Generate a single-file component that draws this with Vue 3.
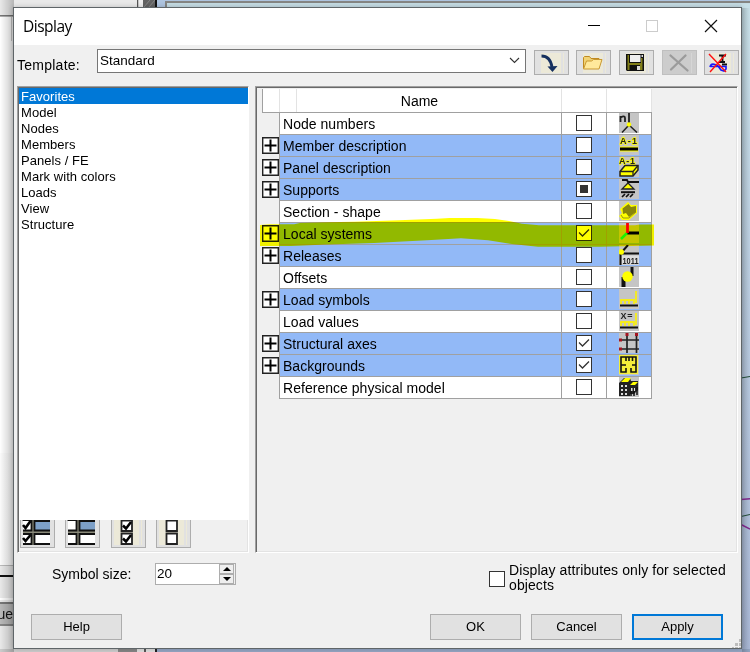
<script setup>
import { ref } from 'vue'

const categories = ['Favorites', 'Model', 'Nodes', 'Members', 'Panels / FE', 'Mark with colors', 'Loads', 'View', 'Structure']
const selected = ref('Favorites')
const rows = [
  { name: 'Node numbers', group: false, state: 'off', icon: 'nodes' },
  { name: 'Member description', group: true, state: 'off', icon: 'member' },
  { name: 'Panel description', group: true, state: 'off', icon: 'panel' },
  { name: 'Supports', group: true, state: 'mixed', icon: 'support' },
  { name: 'Section - shape', group: false, state: 'off', icon: 'section' },
  { name: 'Local systems', group: true, state: 'on', icon: 'axes' },
  { name: 'Releases', group: true, state: 'off', icon: 'release' },
  { name: 'Offsets', group: false, state: 'off', icon: 'offset' },
  { name: 'Load symbols', group: true, state: 'off', icon: 'loads' },
  { name: 'Load values', group: false, state: 'off', icon: 'values' },
  { name: 'Structural axes', group: true, state: 'on', icon: 'grid' },
  { name: 'Backgrounds', group: true, state: 'on', icon: 'plan' },
  { name: 'Reference physical model', group: false, state: 'off', icon: 'model' }
]
</script>

<template>
  <main class="desktop">
    <svg class="backdrop" width="750" height="652" viewBox="0 0 750 652">
      <defs>
        <linearGradient id="sky" x1="0" y1="0" x2="0" y2="1">
          <stop offset="0" stop-color="#c8e0e8" /><stop offset=".5" stop-color="#b9cbe0" /><stop offset="1" stop-color="#a9b8d6" />
        </linearGradient>
        <linearGradient id="shade" x1="0" y1="0" x2="1" y2="0">
          <stop offset="0" stop-color="#000" stop-opacity="0" /><stop offset="1" stop-color="#000" stop-opacity=".22" />
        </linearGradient>
        <linearGradient id="shadeRight" x1="0" y1="0" x2="1" y2="0">
          <stop offset="0" stop-color="#000" stop-opacity=".17" /><stop offset="1" stop-color="#000" stop-opacity="0" />
        </linearGradient>
      </defs>
      <rect width="750" height="652" fill="#e9e9e9" />
      <rect y="15" width="138" height="1.5" fill="#777" />
      <rect y="17" width="14" height="436" fill="#fff" />
      <rect y="453" width="14" height="112" fill="#fbfbfb" />
      <rect x="11" y="17" width="1" height="24" fill="#ccc" />
      <rect y="565" width="14" height="1" fill="#bbb" />
      <rect y="575" width="14" height="2" fill="#111" />
      <rect y="598" width="14" height="2" fill="#fff" />
      <rect y="602" width="14" height="24" fill="#b9b9b9" />
      <rect y="602" width="14" height="2" fill="#777" /><rect y="624" width="14" height="2" fill="#888" />
      <rect x="137" width="1.5" height="8" fill="#555" />
      <rect x="138.500" width="4.500" height="8" fill="#eee" />
      <rect x="143" width="12" height="8" fill="#626262" />
      <path d="M144 7l6-7M149 7l6-7" stroke="#858585" />
      <rect x="155" width="2" height="8" fill="#111" />
      <rect x="157" width="593" height="8" fill="#aec4df" />
      <rect x="165" y="1" width="585" height="7" fill="#c5dce4" />
      <path d="M166 8V2H750" fill="none" stroke="#858583" stroke-width="2" />
      <rect x="742" y="4" width="8" height="648" fill="url(#sky)" />
      <rect y="649" width="118" height="3" fill="#ccc" />
      <rect x="118" y="649" width="19" height="3" fill="#858585" />
      <rect x="137" y="649" width="7" height="3" fill="#ddd" />
      <rect x="144" y="649" width="2" height="3" fill="#555" />
      <rect x="146" y="649" width="9" height="3" fill="#ddd" />
      <rect x="155" y="649" width="2" height="3" fill="#222" />
      <rect x="157" y="649" width="593" height="3" fill="#94a5c2" />
      <rect width="14" height="652" fill="url(#shade)" />
      <rect x="742" y="8" width="8" height="644" fill="url(#shadeRight)" />
      <path d="M741 378l9-1.500M741 516.500l9-2" stroke="#244c38" stroke-width="1.200" />
      <path d="M741 499.500l9-.8M741 524.500l9 4.500" stroke="#7d2889" stroke-width="1.400" />
      <text x="-2.500" y="619" class="back-text">ue</text>
    </svg>

    <section class="dialog">
      <header class="titlebar">
        <h1>Display</h1>
        <svg width="130" height="14" viewBox="0 0 130 14" fill="none">
          <path d="M0 6.500h12" stroke="#000" />
          <rect x="58.500" y="1.500" width="11" height="11" stroke="#ccc" />
          <path d="M117 1l12 12M129 1l-12 12" stroke="#111" stroke-width="1.150" />
        </svg>
      </header>

      <div class="toolbar">
        <label>Template:</label>
        <div class="combo"><span>Standard</span>
          <svg width="11" height="7" viewBox="0 0 11 7"><path d="M1 1l4.500 4.500L10 1" fill="none" stroke="#333" stroke-width="1.100" /></svg>
        </div>
        <div class="tools">
          <button class="tool"><svg width="33" height="23" viewBox="0 0 33 23">
            <rect x="6" y="2" width="20" height="20" fill="#ece9d8" />
            <path d="M28.500 2v20" stroke="#ece9d8" />
            <path d="M6.500 5c7 0 9.500 5 10.500 11" fill="none" stroke="#15305f" stroke-width="2.800" /><path d="M12.500 15.500l10-.5-5 6z" fill="#15305f" />
          </svg></button>
          <button class="tool"><svg width="33" height="23" viewBox="0 0 33 23">
            <rect x="6" y="2" width="20" height="20" fill="#ece9d8" />
            <path d="M28.500 2v20" stroke="#ece9d8" />
            <path d="M6.500 17V6.500l1-1h5l1.500 2H22V17z" fill="#f1d374" stroke="#c08a20" /><path d="M6.500 18l3-8h5l2-1.500h8.500l-3 9.500z" fill="#ffe99b" stroke="#c99831" />
          </svg></button>
          <button class="tool"><svg width="33" height="23" viewBox="0 0 33 23">
            <rect x="6" y="2" width="20" height="20" fill="#ece9d8" />
            <path d="M28.500 2v20" stroke="#ece9d8" />
            <path d="M6 3h18v17H7l-1-1z" fill="#111" /><path d="M7.500 4h1.500v8h12V7h1.500v12h-2.500v-5H9.500v5h-2z" fill="#827f19" /><path d="M10 4h10.500v7H10z" fill="#eee" /><path d="M21.500 4h1.500v2h-1.500z" fill="#ddd" /><path d="M17 15h3v4h-3z" fill="#ddd" />
          </svg></button>
          <button class="tool disabled"><svg width="33" height="23" viewBox="0 0 33 23">
            <path d="M28.500 2v20" stroke="#d6d6d6" />
            <path d="M7.500 4.500l17 15M22.500 4.500L8 18.500" fill="none" stroke="#9b9b9b" stroke-width="2.300" stroke-linecap="round" />
          </svg></button>
          <button class="tool"><svg width="33" height="23" viewBox="0 0 33 23">
            <rect x="6" y="2" width="20" height="20" fill="#ece9d8" />
            <path d="M28.500 2v20" stroke="#ece9d8" />
            <path d="M14 4.500h7M17.500 4v7M14 11h6M17 13.500h5" stroke="#111" stroke-width="1.800" />
            <path d="M5 16q1-4 5-2.500l3 1.500 3 4 3 1 2-2v-3M5 15.500h16" fill="none" stroke="#1718ff" stroke-width="1.700" />
            <path d="M4 3l17 18M21 3L5 21" stroke="#f11" stroke-width="1.400" />
          </svg></button>
        </div>
      </div>

      <div class="panels">
        <div class="sunken left">
          <ul class="list">
            <li v-for="item in categories" :key="item" :class="{ active: item === selected }" @click="selected = item">{{ item }}</li>
          </ul>
          <div class="mini-tools">
            <button v-for="n in 4" :key="n" class="mini" :class="'mini-' + n">
              <svg width="33" height="27" viewBox="0 0 33 27">
                <template v-if="n < 3">
                  <rect x="2" width="27" height="25" fill="#8a8a7a" />
                  <path d="M2 0h8.500v10.500H2zM2 14h8.500v10H2z" fill="#fff" />
                  <path d="M2 .5V0h8.500v10.500H2M2 14h8.500v10H2" fill="none" stroke="#111" stroke-width="1.800" />
                  <path d="M14 1h15v9.500H14z" fill="#7da0c8" /><path d="M14 14h15v10H14z" fill="#fff" />
                  <path d="M29 1H13.500v9.500H29M29 14H13.500v10H29" fill="none" stroke="#111" stroke-width="1.800" />
                  <path v-if="n === 1" d="M2 5l2.500 3 5-7M2 18l2.500 3 5-6" fill="none" stroke="#000" stroke-width="2.600" />
                </template>
                <template v-else>
                  <rect x="2" width="25" height="25" fill="#ece9d8" />
                  <path d="M29.500 0v25" stroke="#ece9d8" />
                  <path d="M9.500 .5h10.500v10.500H9.500zM9.500 13.500h10.500V24H9.500z" fill="#fff" stroke="#222" stroke-width="1.800" />
                  <path v-if="n === 3" d="M11 5.500l3 3 5-6.500M11 18.500l3 3 5-6.500" fill="none" stroke="#000" stroke-width="2.500" />
                </template>
              </svg>
            </button>
          </div>
        </div>

        <div class="sunken right">
          <div class="table">
            <div class="thead"><i /><i /><span>Name</span><i /><i /></div>
            <div v-for="row in rows" :key="row.name" class="row" :class="{ group: row.group }">
              <div class="expander">
                <svg v-if="row.group" width="17" height="17" viewBox="0 0 17 17"><path d="M.7 .7h15.600v15.600H.7z" fill="#fff" stroke="#222" stroke-width="1.400" /><path d="M8.500 2.500v12M2.500 8.500h12" stroke="#000" stroke-width="2" /></svg>
              </div>
              <div class="name">{{ row.name }}</div>
              <div class="check">
                <span class="box"><svg v-if="row.state !== 'off'" width="14" height="14" viewBox="0 0 14 14">
                  <path v-if="row.state === 'on'" d="M2 6.500l3.500 3.500L12 3.500" fill="none" stroke="#333" stroke-width="1.300" />
                  <path v-else d="M3 3h8v8H3z" fill="#333" />
                </svg></span>
              </div>
              <div class="picture">
                <svg width="20" height="20" viewBox="0 0 20 20">
                  <rect width="20" height="20" fill="#c5c5c5" />
                  <g v-if="row.icon === 'nodes'">
                    <path d="M1.500 3v6M1.500 4.500Q6 2 6 5v4M10 0v9" fill="none" stroke="#222" stroke-width="1.800" />
                    <path d="M10 12L3 19.500M10 12l8 7.500M10 12v-3" stroke="#222" stroke-width="1.500" /><circle cx="10" cy="11.500" r="2.200" fill="#ff0" />
                  </g>
                  <g v-else-if="row.icon === 'member'">
                    <text x="1" y="9" font-size="9" class="halo" textLength="17">A-1</text><path d="M1 14h18" stroke="#ff0" stroke-width="5" /><path d="M1 14h18" stroke="#000" stroke-width="3" />
                  </g>
                  <g v-else-if="row.icon === 'panel'">
                    <text x="0" y="7" font-size="9" class="halo" textLength="16">A-1</text>
                    <path d="M1 14.500l5-6h13v4.500l-5 6H1z" fill="#ff0" stroke="#222" stroke-width="1.500" /><path d="M1 14.500h13l5-6M14 14.500v4" fill="none" stroke="#222" stroke-width="1.300" />
                  </g>
                  <g v-else-if="row.icon === 'support'">
                    <path d="M3 1h5l1 2h11" fill="none" stroke="#111" stroke-width="1.800" /><path d="M9 4l6 6H3z" fill="#ff0" stroke="#222" stroke-width="1.300" /><path d="M2 13.200h14" stroke="#111" stroke-width="2" /><path d="M3 18l3-3M7 18l3-3M11 18l3-3" stroke="#111" stroke-width="1.700" />
                  </g>
                  <g v-else-if="row.icon === 'section'">
                    <path d="M1 8l8-7 3 3h6v8l-8 7H3L0 15l3-3z" fill="#ff0" /><path d="M3.500 7.500L9.500 3l2.500 3 5-1v6l-7 5-3-4-3 1z" fill="#88840b" /><path d="M2 14l2 3h6l7-6" fill="none" stroke="#9a9515" />
                  </g>
                  <g v-else-if="row.icon === 'axes'">
                    <path d="M8 10h12" stroke="#000" stroke-width="3" /><path d="M8 10l-6 6" stroke="#1df000" stroke-width="2.500" /><path d="M8.500 0v10" stroke="#f00" stroke-width="2.800" />
                  </g>
                  <g v-else-if="row.icon === 'release'">
                    <path d="M1.500 8v12M2 8l7-8M2 8.500h18" stroke="#111" stroke-width="2" /><circle cx="2.300" cy="7" r="2.700" fill="#ff0" />
                    <path d="M3 10.500h17v9H3z" fill="#ddd" /><text x="3.500" y="18.500" font-size="8.500" textLength="16" lengthAdjust="spacingAndGlyphs">1011</text>
                  </g>
                  <g v-else-if="row.icon === 'offset'">
                    <path d="M13 0v9" stroke="#111" stroke-width="3" /><path d="M4.500 10v10" stroke="#111" stroke-width="4" /><circle cx="8.500" cy="9.500" r="5.200" fill="#ff0" />
                  </g>
                  <g v-else-if="row.icon === 'loads' || row.icon === 'values'">
                    <text v-if="row.icon === 'values'" x="1.500" y="7.500" font-size="9" textLength="12">X=</text>
                    <path d="M2 15v-4h13v4M6 11v4M10 11v4M17 2v12" fill="none" stroke="#f6ed19" stroke-width="1.800" /><path d="M1 16.500h18" stroke="#111" stroke-width="2" />
                  </g>
                  <g v-else-if="row.icon === 'grid'">
                    <path d="M8 1v19M17.500 1v19M1 7h19M1 16h19" stroke="#222" stroke-width="1.700" /><path d="M6.500 0h3v3h-3zM16 0h3v3h-3zM0 5.500h3v3H0zM0 14.500h3v3H0z" fill="#a41420" />
                  </g>
                  <g v-else-if="row.icon === 'plan'">
                    <path d="M0 0h19v19H0z" fill="#f4ee3a" /><path d="M7 10H2V2h15v8h-4M2 9v8h5v-4M17 9v8h-5v-4M7 2v4M10 2v4M13.500 2v4" fill="none" stroke="#111" stroke-width="1.600" />
                  </g>
                  <g v-else>
                    <path d="M0 6l5-5h6l1 3h7v9l-4 4h-4v2H0z" fill="#222" /><path d="M2 5l4-4h6L9 5zM11 8l3-3h5l-3 3z" fill="#ff0" /><path d="M2 8h2v2H2zM6 8h2v2H6zM2 12h2v2H2zM6 12h2v2H6zM2 16h2v2H2zM6 16h2v2H6zM12 11h1.500v3H12zM15 11h1v3h-1z" fill="#ddd" />
                    <path d="M12 14v5M15 14v5M18 10v8" stroke="#111" stroke-width="1.500" />
                  </g>
                </svg>
              </div>
            </div>
          </div>
          <svg class="marker" width="396" height="31" viewBox="260 217 396 31">
            <path d="M260 224l10-.7h24l6-1.400 26-.6 28-.5 45-1.500 38-1.600 18-1h17l23 1.300 14 2 13 2.700 17 1.500h96l5-.8h14v21l-54 1.400h-62l-24-2.500-26-4-27-2-34 2-53 2.700-47 1.500-36 1.500h-38z" fill="#ff0" />
          </svg>
        </div>
      </div>

      <div class="settings">
        <label>Symbol size:</label>
        <div class="spinner"><span>20</span>
          <div class="arrows"><b><svg width="8" height="4" viewBox="0 0 8 4"><path d="M4 0l4 4H0z" /></svg></b><b><svg width="8" height="4" viewBox="0 0 8 4"><path d="M4 4l4-4H0z" /></svg></b></div>
        </div>
        <div class="only"><span class="box" /><p>Display attributes only for selected<br>objects</p></div>
      </div>

      <footer>
        <button class="action help">Help</button>
        <button class="action">OK</button>
        <button class="action">Cancel</button>
        <button class="action primary">Apply</button>
      </footer>
      <svg class="grip" width="10" height="10" viewBox="0 0 10 10"><path d="M1 9h2v1H1zM4 9h3v1H4zM8 9h2v1H8zM4 5h3v3H4zM8 5h2v3H8zM8 1h2v3H8z" fill="#bdbdbd" /></svg>
    </section>
  </main>
</template>

<style>
html, body { margin: 0; overflow: hidden; }
</style>

<style scoped>
* { box-sizing: border-box; }
.desktop { position: relative; width: 750px; height: 652px; overflow: hidden; padding: 7px 0 0 13px; font: 14px/16px "Liberation Sans", Arial, sans-serif; color: #000; }
.backdrop { position: absolute; left: 0; top: 0; }
.back-text { font-size: 14px; fill: #111; }
svg { display: block; }
button { padding: 0; margin: 0; border-radius: 0; color: #000; }
.dialog { position: relative; width: 729px; height: 642px; border: 1px solid #5f6568; background: #f0f0f0; box-shadow: 0 0 5px rgba(0, 0, 0, .2); }
.titlebar { display: flex; justify-content: space-between; height: 37px; padding: 11px 23px 0 9px; background: #fff; }
.titlebar h1 { margin: -3px 0 0; font: 400 15.5px/20px "Open Sans", "Noto Sans", sans-serif; letter-spacing: -.5px; }
.toolbar { display: flex; height: 41px; padding-left: 3px; align-items: flex-start; }
.toolbar label { width: 80px; padding-top: 12px; letter-spacing: .25px; }
.combo { display: flex; justify-content: space-between; align-items: center; width: 429px; height: 24px; margin-top: 4px; padding: 0 5px 1px 2px; border: 1px solid #767676; background: #fff; font-size: 13.5px; }
.tools { display: grid; grid-template-columns: 42px 43px 43px 42px 35px; margin: 5px 0 0 8px; }
.tool { width: 35px; height: 25px; border: 1px solid #adadad; background: #e1e1e1; }
.tool.disabled { background: #ccc; border-color: #bfbfbf; }
.panels { display: flex; gap: 6px; height: 467px; padding-left: 3px; }
.sunken { position: relative; border: 1px solid; border-color: #a0a0a0 #fff #fff #a0a0a0; box-shadow: inset 1px 1px #696969, inset -1px -1px #e3e3e3; padding: 1px; }
.left { width: 232px; padding-right: 0; }
.right { width: 483px; }
.list { list-style: none; height: 432px; margin: 0; padding: 0; background: #fff; font-size: 13px; letter-spacing: .05px; }
.list li { height: 16px; padding-left: 2px; line-height: 17px; }
.list .active { background: #0078d7; color: #fff; }
.mini-tools { display: flex; height: 28px; padding-left: 1px; }
.mini { width: 35px; height: 28px; border: 1px solid #adadad; border-top: 0; background: #e1e1e1; }
.mini-2 { margin-left: 10px; }
.mini-3 { margin-left: 11px; }
.mini-4 { margin-left: 10px; }
.table { width: 390px; margin: 1px 0 0 5px; }
.thead { display: grid; grid-template-columns: 17px 17px 265px 45px 45px; height: 24px; border-left: 1px solid #a0a0a0; border-bottom: 1px solid #a0a0a0; background: #fff; }
.thead i, .thead span { border-right: 1px solid #e3e3e3; }
.thead span { padding-top: 4px; text-align: center; padding-right: 19px; }
.row { display: grid; grid-template-columns: 17px 283px 45px 45px; height: 22px; }
.row > .name, .check, .picture { border-right: 1px solid #a0a0a0; border-bottom: 1px solid #a0a0a0; background: #fff; }
.row.group > .name, .group .check, .group .picture { background: #92b9f7; }
.expander { padding-top: 2px; }
.row > .name { border-left: 1px solid #a0a0a0; padding: 3px 0 0 3px; letter-spacing: .03px; white-space: nowrap; }
.check { padding: 2px 0 0 14px; }
.box { display: block; flex: none; width: 16px; height: 16px; border: 1px solid #333; background: #fff; }
.picture { padding-left: 12px; }
.picture text { font-family: "Liberation Sans", sans-serif; font-weight: 700; fill: #222; }
.picture .halo { stroke: #ff0; stroke-width: 1.4px; paint-order: stroke; }
.marker { position: absolute; left: 4px; top: 131px; mix-blend-mode: multiply; }
.settings { display: flex; height: 61px; padding-left: 38px; }
.settings label { width: 103px; padding-top: 13px; letter-spacing: 0; }
.spinner { display: flex; justify-content: space-between; width: 81px; height: 22px; margin-top: 10px; padding: 0 0 0 1px; border: 1px solid #adadad; background: #fff; }
.spinner span { padding-top: 2px; font-size: 13.5px; }
.arrows { display: grid; grid-template-rows: 10px 10px; width: 16px; background: #f0f0f0; }
.arrows b { display: grid; place-items: center; margin: 0 1px 0 0; border: 1px solid #adadad; background: #eee; }
.only { display: flex; gap: 4px; margin: 10px 0 0 253px; }
.only .box { margin-top: 8px; }
.only p { margin: 0; line-height: 15px; white-space: nowrap; letter-spacing: .1px; }
footer { display: flex; gap: 10px; padding-left: 17px; }
.action { width: 91px; height: 26px; padding-bottom: 2px; border: 1px solid #adadad; background: #e1e1e1; font: 13px/15px "Liberation Sans", Arial, sans-serif; }
.help { margin-right: 298px; }
.primary { border: 2px solid #0078d7; }
.grip { position: absolute; right: 0; bottom: 0; }
</style>
